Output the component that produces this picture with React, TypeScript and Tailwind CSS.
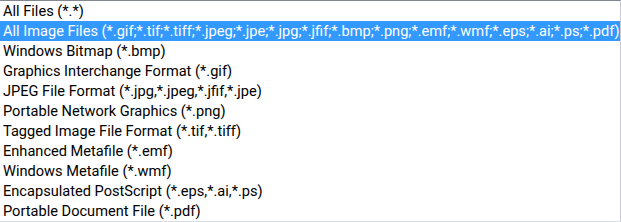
import React from "react";

const items = [
  "All Files (*.*)",
  "All Image Files (*.gif;*.tif;*.tiff;*.jpeg;*.jpe;*.jpg;*.jfif;*.bmp;*.png;*.emf;*.wmf;*.eps;*.ai;*.ps;*.pdf)",
  "Windows Bitmap (*.bmp)",
  "Graphics Interchange Format (*.gif)",
  "JPEG File Format (*.jpg,*.jpeg,*.jfif,*.jpe)",
  "Portable Network Graphics (*.png)",
  "Tagged Image File Format (*.tif,*.tiff)",
  "Enhanced Metafile (*.emf)",
  "Windows Metafile (*.wmf)",
  "Encapsulated PostScript (*.eps,*.ai,*.ps)",
  "Portable Document File (*.pdf)",
];

const selected = 1;

export default function App() {
  return (
    <div className="w-[621px] h-[222px] bg-white border-t border-t-[#828790] border-r border-r-[#c9c9d3] border-b border-b-[#d5dde5] flex flex-col overflow-hidden font-['Roboto','Liberation_Sans',sans-serif] text-[14.6px]">
      {items.map((label, idx) => (
        <div
          key={idx}
          className={`h-[20px] shrink-0 pl-[3px] flex items-center whitespace-nowrap leading-none ${
            idx === selected ? "bg-[#3399ff] text-white" : "text-black"
          }`}
        >
          {label}
        </div>
      ))}
    </div>
  );
}
